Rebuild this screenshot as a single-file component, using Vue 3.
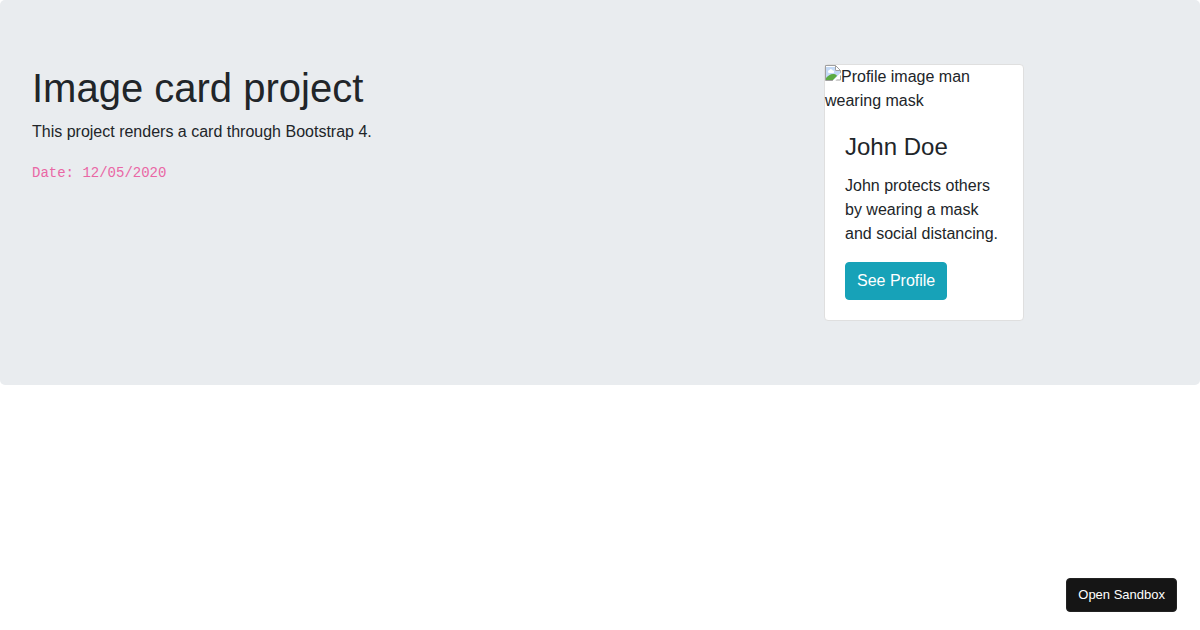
<template>
  <div class="jumbotron">
    <div class="row">
      <div class="intro">
        <h1>Image card project</h1>
        <p>This project renders a card through Bootstrap 4.</p>
        <code>Date: 12/05/2020</code>
      </div>
      <div class="card">
        <div class="card-img">
          <svg class="broken" width="16" height="16" viewBox="0 0 16 16" aria-hidden="true">
            <path d="M.5 .5h10l5 5v10H.5z" fill="#fff" />
            <path d="M1 2h9v4h5v3l-6 6H1z" fill="#c3d9f5" />
            <path d="M3 6.500a1.500 1.500 0 0 1 1.500-1.500 1.800 1.800 0 0 1 3.300.5A1.200 1.200 0 0 1 8 8H4a1.500 1.500 0 0 1-1-1.500z" fill="#fff" />
            <path d="M1 15v-2c2-2.500 5-4.500 8-4 1.500.3 2.500 1 3 2L8 15z" fill="#5bab42" />
            <path d="M8 15.500H.5V.5h10l5 5v9.500h-5M10.500 .5v5h5" fill="none" stroke="#a0a0a0" />
            <path d="M16 7.500v2.500L10 16H7.500z" fill="#fff" />
          </svg>{{ card.alt }}
        </div>
        <div class="card-body">
          <h4>{{ card.name }}</h4>
          <p>{{ card.text }}</p>
          <a href="#" class="btn">See Profile</a>
        </div>
      </div>
    </div>
  </div>
  <button type="button" class="sandbox">Open Sandbox</button>
</template>

<script setup>
const card = {
  alt: 'Profile image man wearing mask',
  name: 'John Doe',
  text: 'John protects others by wearing a mask and social distancing.'
}
</script>

<style>
body {
  margin: 0;
  background: #fff;
}
</style>

<style scoped>
* {
  box-sizing: border-box;
}

.jumbotron {
  padding: 64px 32px;
  background-color: #e9ecef;
  border-radius: 5px;
  font-family: "Liberation Sans", Arial, sans-serif;
  font-size: 16px;
  line-height: 24px;
  color: #212529;
}

.row {
  display: grid;
  grid-template-columns: 2fr 1fr;
  gap: 104px;
}

h1 {
  margin: 0 0 8px;
  font-size: 40px;
  line-height: 48px;
  font-weight: 400;
}

p {
  margin: 0 0 16px;
}

code {
  font-family: "Liberation Mono", monospace;
  font-size: 14px;
  color: #e967a5;
}

.card {
  width: 200px;
  background-color: #fff;
  border: 1px solid #dfdfdf;
  border-radius: 4px;
}

.broken {
  vertical-align: 1px;
}

.card-body {
  padding: 20px;
}

h4 {
  margin: 0 0 13px;
  font-size: 24px;
  line-height: 28px;
  font-weight: 400;
}

.btn {
  display: inline-block;
  padding: 6px 11px;
  border: 1px solid #17a2b8;
  border-radius: 4px;
  background-color: #17a2b8;
  color: #fff;
  text-decoration: none;
}

.sandbox {
  position: fixed;
  right: 23px;
  bottom: 18px;
  height: 34px;
  padding: 0 11px 2px;
  border: 1px solid #222;
  border-radius: 4px;
  background-color: #151515;
  color: #fff;
  font-family: "Liberation Sans", Arial, sans-serif;
  font-size: 13px;
}
</style>
